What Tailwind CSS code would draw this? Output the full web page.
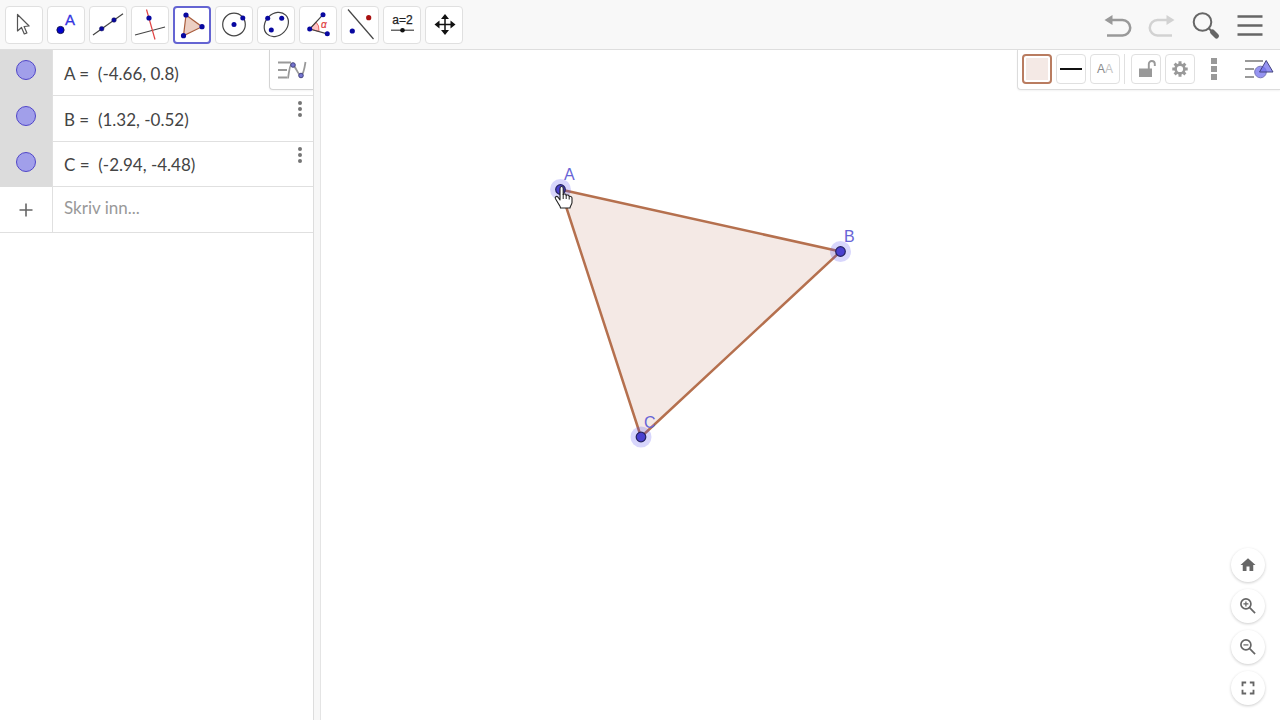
<!DOCTYPE html>
<html lang="nb">
<head>
<meta charset="utf-8">
<meta name="viewport" content="width=device-width, initial-scale=1">
<title>GeoGebra</title>
<script src="https://cdn.jsdelivr.net/npm/@tailwindcss/browser@4"></script>
</head>
<body class="flex h-screen flex-col overflow-hidden bg-white font-['Liberation_Sans',sans-serif] text-[#444]">
<header class="flex h-[50px] shrink-0 items-center justify-between border-b border-[#dedede] bg-[#f8f8f8] pr-3.5 pl-[5px]">
  <nav class="flex gap-1" aria-label="Verktøy">
    <button aria-label="Flytt" class="grid size-[38px] place-items-center rounded-[4px] border border-[#e0e0e0] bg-white"><svg class="size-9" viewBox="1 1 36 36" fill="#fff" stroke="#555" stroke-width="1.2" stroke-linejoin="round"><path d="M12.500 8.500v16.500l4-3.500 2.800 6.500 2.600-1.100-2.800-6.400 5-.5z"/></svg></button>
    <button aria-label="Punkt" class="grid size-[38px] place-items-center rounded-[4px] border border-[#e0e0e0] bg-white"><svg class="size-9" viewBox="1 1 36 36"><circle cx="13.500" cy="24" r="3.600" fill="#0000d0" stroke="#111150"/><text x="18" y="18.500" font-size="15" fill="#3333e0" stroke="#3333e0" stroke-width=".3">A</text></svg></button>
    <button aria-label="Linje" class="grid size-[38px] place-items-center rounded-[4px] border border-[#e0e0e0] bg-white"><svg class="size-9" viewBox="1 1 36 36"><path d="M4 29 34 7.700" stroke="#444" stroke-width="1.200"/><g fill="#0808a0" stroke="#111150" stroke-width=".5"><circle cx="12.700" cy="22.700" r="2.300"/><circle cx="25" cy="14" r="2.300"/></g></svg></button>
    <button aria-label="Normal linje" class="grid size-[38px] place-items-center rounded-[4px] border border-[#e0e0e0] bg-white"><svg class="size-9" viewBox="1 1 36 36"><path d="M4 29 34 21" stroke="#444" stroke-width="1.200"/><path d="M15.500 3.500 24 33.500" stroke="#df4444" stroke-width="1.200"/><circle cx="18" cy="12" r="2.600" fill="#0808a0"/></svg></button>
    <button aria-label="Mangekant" aria-pressed="true" class="grid size-[38px] place-items-center rounded-[4px] border-2 border-[#6464d2] bg-white"><svg class="size-9 max-w-none" viewBox="1 1 36 36"><path d="M12 8 28 19.700 9.500 28.700z" fill="#eccfc3" stroke="#a85c3c" stroke-width="1.200"/><g fill="#0808a0"><circle cx="12" cy="8" r="2.600"/><circle cx="28" cy="19.700" r="2.600"/><circle cx="9.500" cy="28.700" r="2.600"/></g></svg></button>
    <button aria-label="Sirkel" class="grid size-[38px] place-items-center rounded-[4px] border border-[#e0e0e0] bg-white"><svg class="size-9" viewBox="1 1 36 36"><circle cx="19" cy="18.500" r="11.300" fill="none" stroke="#444" stroke-width="1.200"/><g fill="#0808a0"><circle cx="19" cy="18.500" r="2.500"/><circle cx="27.800" cy="12" r="2.500"/></g></svg></button>
    <button aria-label="Ellipse" class="grid size-[38px] place-items-center rounded-[4px] border border-[#e0e0e0] bg-white"><svg class="size-9" viewBox="1 1 36 36"><ellipse cx="19.300" cy="18.500" rx="13.300" ry="10.800" transform="rotate(-45 19.300 18.500)" fill="none" stroke="#444" stroke-width="1.200"/><g fill="#0808a0"><circle cx="10.700" cy="12.300" r="2.500"/><circle cx="24.700" cy="12.300" r="2.500"/><circle cx="14.300" cy="24" r="2.500"/></g></svg></button>
    <button aria-label="Vinkel" class="grid size-[38px] place-items-center rounded-[4px] border border-[#e0e0e0] bg-white"><svg class="size-9" viewBox="1 1 36 36"><path d="M10.700 23 17 16Q20.500 19 20 25.500z" fill="#ffc4c4" stroke="#e66" stroke-width="1"/><path d="M24 8.700 10.700 23 28.300 27.800" fill="none" stroke="#444" stroke-width="1.200"/><g fill="#0808a0"><circle cx="10.700" cy="23" r="2.500"/><circle cx="24" cy="8.700" r="2.500"/><circle cx="28.300" cy="27.800" r="2.500"/></g><text x="22" y="21.500" font-size="10" font-style="italic" fill="#e04040" stroke="#e04040" stroke-width=".2">α</text></svg></button>
    <button aria-label="Speiling" class="grid size-[38px] place-items-center rounded-[4px] border border-[#e0e0e0] bg-white"><svg class="size-9" viewBox="1 1 36 36"><path d="M7 3.500 32.500 33" stroke="#444" stroke-width="1.200"/><circle cx="27.700" cy="11.700" r="2.600" fill="#a81010"/><circle cx="11.300" cy="25" r="2.600" fill="#0808a0"/></svg></button>
    <button aria-label="Glider" class="grid size-[38px] place-items-center rounded-[4px] border border-[#e0e0e0] bg-white"><svg class="size-9" viewBox="1 1 36 36"><text x="19.500" y="18" text-anchor="middle" font-size="12" fill="#222" stroke="#222" stroke-width=".25">a=2</text><path d="M8 24.200H31" stroke="#444" stroke-width="1.200"/><circle cx="19.500" cy="24.200" r="2.300" fill="#111"/></svg></button>
    <button aria-label="Flytt grafikkfelt" class="grid size-[38px] place-items-center rounded-[4px] border border-[#e0e0e0] bg-white"><svg class="size-9" viewBox="1 1 36 36"><path d="M20 12v13M13 18.500h14" stroke="#111" stroke-width="1.500"/><path d="m20 8 4 5h-8zM20 29l4-5h-8zM9.500 18.500l5-4v8zM30.500 18.500l-5-4v8z" fill="#111"/></svg></button>
  </nav>
  <div class="flex items-center gap-3">
    <button aria-label="Angre" class="grid size-8 place-items-center"><svg class="size-8" viewBox="0 0 32 32"><path d="M8 11h12.500a7.300 7.300 0 0 1 0 15.500H5" fill="none" stroke="#999" stroke-width="2.500"/><path d="M2.500 11 10.500 6v10z" fill="#999"/></svg></button>
    <button aria-label="Gjør om" class="grid size-8 place-items-center"><svg class="size-8" viewBox="0 0 32 32"><path d="M22 11H11.500a7.300 7.300 0 0 0 0 15.500H26" fill="none" stroke="#d2d2d2" stroke-width="2.500"/><path d="m28.500 11-8-5v10z" fill="#d2d2d2"/></svg></button>
    <button aria-label="Søk" class="grid size-8 place-items-center"><svg class="size-8" viewBox="0 0 32 32" fill="none" stroke="#666"><circle cx="12.500" cy="13" r="8.800" stroke-width="2"/><path d="m18.700 19.300 4 4" stroke-width="2"/><path d="m22.500 23 4 4" stroke-width="5" stroke-linecap="round"/></svg></button>
    <button aria-label="Meny" class="grid size-8 place-items-center"><svg class="size-8" viewBox="0 0 32 32"><path d="M3.500 7.500h25M3.500 16.500h25M3.500 25.500h25" stroke="#666" stroke-width="2.600"/></svg></button>
  </div>
</header>
<div class="flex min-h-0 flex-1">
  <aside class="relative w-[314px] shrink-0 border-r border-[#ddd] bg-white font-['Lato',sans-serif] text-[17px]">
    <ul>
      <li class="flex h-[46px]">
        <div class="grid w-[52px] place-items-start justify-center bg-[#dcdcdc] pt-2.5"><button aria-label="Vis eller skjul A" class="size-5 rounded-full border border-[#5046c8] bg-[#a19fea]"></button></div>
        <div class="flex flex-1 items-center border-b border-l border-[#e0e0e0] pt-0.5 pl-[11px]"><span>A =&nbsp; (-4.66, 0.8)</span></div>
      </li>
      <li class="flex h-[46px]">
        <div class="grid w-[52px] place-items-start justify-center bg-[#dcdcdc] pt-2.5"><button aria-label="Vis eller skjul B" class="size-5 rounded-full border border-[#5046c8] bg-[#a19fea]"></button></div>
        <div class="flex flex-1 items-center justify-between border-b border-l border-[#e0e0e0] pt-0.5 pr-[9px] pl-[11px]"><span>B =&nbsp; (1.32, -0.52)</span><button aria-label="Mer om B" class="self-start pt-0.5"><svg class="h-5 w-2" viewBox="0 0 8 20" fill="#757575"><circle cx="4" cy="3" r="2"/><circle cx="4" cy="9" r="2"/><circle cx="4" cy="15" r="2"/></svg></button></div>
      </li>
      <li class="flex h-[45px]">
        <div class="grid w-[52px] place-items-start justify-center bg-[#dcdcdc] pt-2.5"><button aria-label="Vis eller skjul C" class="size-5 rounded-full border border-[#5046c8] bg-[#a19fea]"></button></div>
        <div class="flex flex-1 items-center justify-between border-b border-l border-[#e0e0e0] pt-0.5 pr-[9px] pl-[11px]"><span>C =&nbsp; (-2.94, -4.48)</span><button aria-label="Mer om C" class="self-start pt-0.5"><svg class="h-5 w-2" viewBox="0 0 8 20" fill="#757575"><circle cx="4" cy="3" r="2"/><circle cx="4" cy="9" r="2"/><circle cx="4" cy="15" r="2"/></svg></button></div>
      </li>
      <li class="flex h-[46px] border-b border-[#e0e0e0]">
        <button aria-label="Legg til" class="grid w-[52px] place-items-center"><svg class="size-4" viewBox="0 0 16 16"><path d="M8 1.500v13M1.500 8h13" stroke="#666" stroke-width="1.600"/></svg></button>
        <input aria-label="Skriv inn" placeholder="Skriv inn..." class="min-w-0 flex-1 border-l border-[#e0e0e0] pb-1 pl-[11px] outline-none placeholder:text-[#999]">
      </li>
    </ul>
    <button aria-label="Stilvalg for algebrafelt" class="absolute top-0 right-0 grid h-10 w-11 place-items-center rounded-bl border-b border-l border-[#d4d4d4] bg-white shadow-xs"><svg class="h-6 w-8" viewBox="0 0 32 24"><path d="M2 4.500h13M2 12h9M2 19.500h9" stroke="#999" stroke-width="2"/><path d="M12 20.500Q14 6 15.500 6C19 6 22 17.500 25 17.500Q27.500 17 29.500 4" fill="none" stroke="#999" stroke-width="1.800"/><g fill="#7474d0" stroke="#444480"><circle cx="17" cy="7" r="2.300"/><circle cx="25" cy="17.500" r="2.300"/></g></svg></button>
  </aside>
  <div class="w-[7px] shrink-0 border-r border-[#e4e4e4] bg-[#f7f7f7]"></div>
  <main class="relative min-w-0 flex-1">
    <svg class="block size-full" role="img" aria-label="Trekant ABC">
      <path d="M239.500 139.500 519.500 201.500 320 387z" fill="#f4e9e5" stroke="#b5704e" stroke-width="2.500" stroke-linejoin="round"/>
      <g fill="#4d44f0" fill-opacity=".22"><circle cx="239.500" cy="139.500" r="10.500"/><circle cx="519.500" cy="201.500" r="10.500"/><circle cx="320" cy="387" r="10.500"/></g>
      <g fill="#4a40cf" stroke="#242260" stroke-width="1.200"><circle cx="239.500" cy="139.500" r="4.800"/><circle cx="519.500" cy="201.500" r="4.800"/><circle cx="320" cy="387" r="4.800"/></g>
      <g fill="#6864d6" font-size="16"><text x="243" y="130">A</text><text x="523" y="192">B</text><text x="323" y="378">C</text></g>
      <g transform="translate(-2.500 -1)" stroke="#222" stroke-linejoin="round">
        <path d="M241.500 151v-11.500c0-2.600 3.200-2.600 3.200 0v6c1-.9 2.800-.5 3 .8 1.200-.8 2.800-.2 3 1.200 1.300-.6 2.800.3 2.800 1.700v4.300c0 2-2 3.500-2 5.500h-9.500c0-2-1.500-3-2.500-5l-2.500-4.200c-1-1.800 1-3.200 2.400-1.800z" fill="#fff" stroke-width="1.100"/>
        <path d="M244.700 145v5M247.700 146v4M250.700 147.500v3" stroke-width="1"/>
      </g>
    </svg>
    <div class="absolute top-0 right-0 flex h-10 items-center gap-1 rounded-bl border-b border-l border-[#dcdcdc] bg-white pr-[5px] pb-px pl-1 shadow-xs">
      <button aria-label="Farge" class="grid size-[30px] place-items-center rounded-[4px] border-2 border-[#b97c60] bg-white"><span class="size-[22px] bg-[#f4e9e5]"></span></button>
      <button aria-label="Linjestil" class="grid size-[30px] place-items-center rounded-[4px] border border-[#e0e0e0] bg-white"><span class="h-0.5 w-[22px] bg-[#111]"></span></button>
      <button aria-label="Tekststil" class="flex size-[30px] items-center justify-center rounded-[4px] border border-[#e0e0e0] bg-white text-[12px] text-[#888]">A<span class="text-[#c4c4c4]">A</span></button>
      <span class="h-[30px] w-px bg-[#e0e0e0]"></span>
      <button aria-label="Lås opp" class="ml-0.5 grid size-[30px] place-items-center rounded-[4px] border border-[#e0e0e0] bg-white"><svg class="size-6" viewBox="0 0 24 24"><path d="M5 11.500h13V20H5z" fill="#999"/><path d="M14.800 12V7a3 3 0 0 1 6 0v2" fill="none" stroke="#999" stroke-width="1.900"/></svg></button>
      <button aria-label="Innstillinger" class="grid size-[30px] place-items-center rounded-[4px] border border-[#e0e0e0] bg-white"><svg class="size-5" viewBox="0 0 20 20" fill="none" stroke="#999"><circle cx="10" cy="10" r="4.400" stroke-width="2.600"/><path d="M10 2.300v3M10 14.700v3M2.300 10h3M14.700 10h3M4.600 4.600l2.200 2.200M13.200 13.200l2.200 2.200M15.400 4.600l-2.200 2.200M6.800 13.200l-2.200 2.200" stroke-width="3"/></svg></button>
      <button aria-label="Mer" class="grid size-[30px] place-items-center"><svg class="h-6 w-2" viewBox="0 0 8 24" fill="#999"><path d="M1 1h6v6H1zM1 9h6v6H1zM1 17h6v6H1z"/></svg></button>
      <button aria-label="Stilvalg for grafikkfelt" class="ml-2.5 grid h-[30px] w-8 place-items-center"><svg class="h-6 w-8" viewBox="0 0 32 24"><path d="M2 4h18M2 12h9M2 20h9" stroke="#999" stroke-width="2"/><g fill="#7370ee" fill-opacity=".75" stroke="#444480"><circle cx="17.500" cy="15" r="5.800" stroke="#7777b8"/><path d="M23.200 3.500 30 15H16.500z"/></g></svg></button>
    </div>
    <div class="absolute right-[15px] bottom-[15px] flex flex-col gap-[7px]">
      <button aria-label="Standardvisning" class="grid size-[34px] place-items-center rounded-full bg-white shadow-[0_1px_3px_#0003]"><svg class="size-[18px]" viewBox="0 0 24 24" fill="#666"><path d="M10 20v-6h4v6h5v-8h3L12 3 2 12h3v8z"/></svg></button>
      <button aria-label="Forstørr" class="grid size-[34px] place-items-center rounded-full bg-white shadow-[0_1px_3px_#0003]"><svg class="size-5" viewBox="0 0 24 24" fill="none" stroke="#666" stroke-width="2"><circle cx="9.500" cy="9.500" r="6"/><path d="m14 14 6.500 6.500"/><path d="M9.500 6.500v6M6.500 9.500h6" stroke-width="1.500"/></svg></button>
      <button aria-label="Forminsk" class="grid size-[34px] place-items-center rounded-full bg-white shadow-[0_1px_3px_#0003]"><svg class="size-5" viewBox="0 0 24 24" fill="none" stroke="#666" stroke-width="2"><circle cx="9.500" cy="9.500" r="6"/><path d="m14 14 6.500 6.500"/><path d="M6.500 9.500h6" stroke-width="1.500"/></svg></button>
      <button aria-label="Fullskjerm" class="grid size-[34px] place-items-center rounded-full bg-white shadow-[0_1px_3px_#0003]"><svg class="size-[22px]" viewBox="0 0 24 24" fill="#666"><path d="M7 14H5v5h5v-2H7zM5 10h2V7h3V5H5zM17 17h-3v2h5v-5h-2zM14 5v2h3v3h2V5z"/></svg></button>
    </div>
  </main>
</div>
</body>
</html>
